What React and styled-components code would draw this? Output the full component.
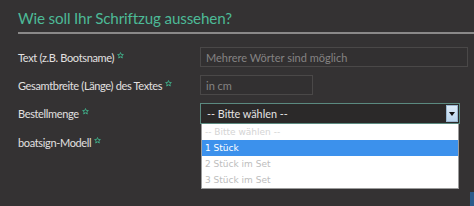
import React from "react";
import styled, { createGlobalStyle } from "styled-components";

const Global = createGlobalStyle`
  html, body { margin: 0; padding: 0; background: #343233; }
  body { font-family: "Lato", "Noto Sans", sans-serif; }
`;

const Page = styled.div`
  width: 474px;
  height: 206px;
  background: #343233;
  padding-left: 18px;
  box-sizing: border-box;
  overflow: hidden;
  position: relative;
`;

const Title = styled.h2`
  margin: 0;
  padding-top: 7px;
  height: 25px;
  font-size: 15.2px;
  font-weight: 400;
  letter-spacing: -0.15px;
  color: #4dba97;
  line-height: 22px;
`;

const Rule = styled.div`
  height: 2px;
  background: #8a8989;
  margin-bottom: 13px;
`;

const Grid = styled.div`
  display: grid;
  grid-template-columns: 182px 1fr;
  grid-auto-rows: 20px;
  row-gap: 8px;
  padding-right: 6px;
`;

const Label = styled.div`
  display: flex;
  align-items: center;
  gap: 3px;
  font-size: 11px;
  letter-spacing: -0.35px;
  color: #e2e0e0;
  white-space: nowrap;
  margin-top: ${(p) => p.$shift || 0}px;
`;

const Input = styled.div`
  box-sizing: border-box;
  height: 20px;
  width: ${(p) => p.$width || "100%"};
  border: 1px solid #4a4848;
  background: #323031;
  color: #858383;
  font-size: 11px;
  display: flex;
  align-items: center;
  padding-left: 5px;
`;

const SelectWrap = styled.div`
  position: relative;
  width: 260px;
  height: 21px;
`;

const SelectBox = styled.div`
  box-sizing: border-box;
  height: 21px;
  border: 1px solid #5b8a80;
  background: #2b2929;
  color: #e6e4e4;
  font-size: 10.8px;
  display: flex;
  align-items: center;
  padding-left: 6px;
  position: relative;
`;

const Arrow = styled.div`
  position: absolute;
  right: 1px;
  top: 1px;
  bottom: 1px;
  width: 10px;
  background: linear-gradient(#dcebf8, #bcd6ee);
  border: 1px solid #9ab7d0;
  display: flex;
  align-items: center;
  justify-content: center;
`;

const List = styled.ul`
  position: absolute;
  left: 1px;
  top: 21px;
  width: 258px;
  margin: 0;
  padding: 0;
  list-style: none;
  background: #fff;
  border: 1px solid #9b9b9b;
  border-top: none;
  box-sizing: border-box;
  z-index: 2;
`;

const Option = styled.li`
  height: 16px;
  line-height: 16px;
  padding-left: 3px;
  font-family: "DejaVu Sans", sans-serif;
  font-size: 9px;
  color: ${(p) => (p.$active ? "#fff" : p.$muted ? "#d4d4d4" : "#bdbdbd")};
  background: ${(p) => (p.$active ? "#3c91ec" : "transparent")};
`;

const Corner = styled.div`
  position: absolute;
  right: 0;
  bottom: 0;
  width: 4px;
  height: 14px;
  background: #2a5a8a;
`;

const Star = () => (
  <svg width="7" height="7" viewBox="0 0 10 10" style={{ marginTop: -4 }}>
    <path
      d="M5 0.8 L6.1 3.6 L9.1 3.7 L6.8 5.6 L7.6 8.6 L5 6.9 L2.4 8.6 L3.2 5.6 L0.9 3.7 L3.9 3.6 Z"
      fill="none"
      stroke="#3fa784"
      strokeWidth="1.4"
    />
  </svg>
);

export default function App() {
  return (
    <>
      <Global />
      <Page>
        <Title>Wie soll Ihr Schriftzug aussehen?</Title>
        <Rule />
        <Grid>
          <Label>
            Text (z.B. Bootsname) <Star />
          </Label>
          <Input>Mehrere Wörter sind möglich</Input>
          <Label>
            Gesamtbreite (Länge) des Textes <Star />
          </Label>
          <Input $width="113px">in cm</Input>
          <Label>
            Bestellmenge <Star />
          </Label>
          <SelectWrap>
            <SelectBox>
              -- Bitte wählen --
              <Arrow>
                <svg width="6" height="4" viewBox="0 0 6 4">
                  <path d="M0 0 H6 L3 4 Z" fill="#111" />
                </svg>
              </Arrow>
            </SelectBox>
            <List>
              <Option $muted>-- Bitte wählen --</Option>
              <Option $active>1 Stück</Option>
              <Option>2 Stück im Set</Option>
              <Option>3 Stück im Set</Option>
            </List>
          </SelectWrap>
          <Label $shift={3}>
            boatsign-Modell <Star />
          </Label>
          <div />
        </Grid>
        <Corner />
      </Page>
    </>
  );
}
